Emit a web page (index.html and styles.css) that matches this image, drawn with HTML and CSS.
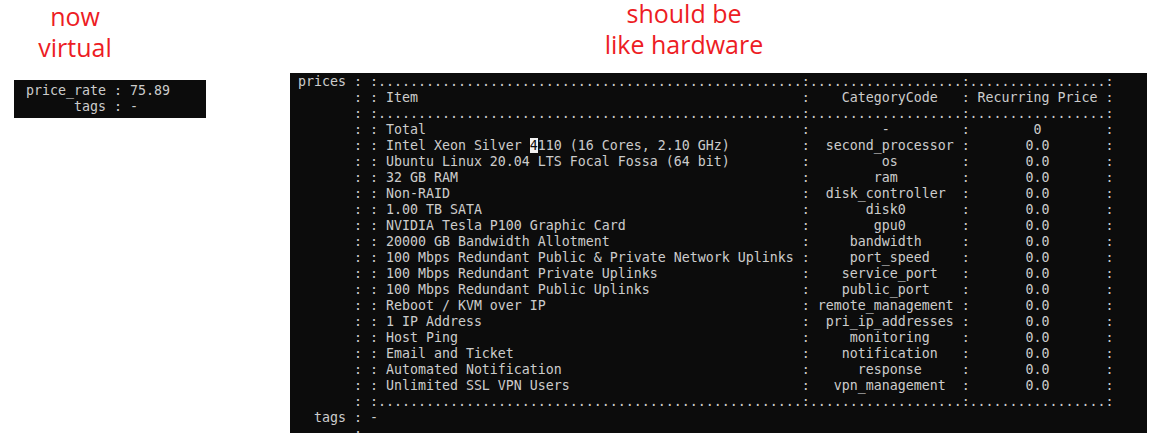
FILE: index.html
```html
<!DOCTYPE html>
<html lang="en">
<head>
<meta charset="utf-8">
<title>prices: virtual vs hardware</title>
<link rel="stylesheet" href="styles.css">
</head>
<body>
<div class="page">
  <section class="col col-virtual">
    <h2 class="note">now<br>virtual</h2>
    <div class="term term-small">
      <div class="row">price_rate : 75.89</div>
      <div class="row">      tags : -</div>
    </div>
  </section>

  <section class="col col-hw">
    <h2 class="note note-hw">should be<br>like hardware</h2>
    <div class="term term-big">
      <div class="row"><span class="k">prices</span><span class="s"> : </span><span class="b">:</span><span class="w53">.....................................................</span><span class="b">:</span><span class="w19">...................</span><span class="b">:</span><span class="w17">.................</span><span class="b">:</span></div>
      <div class="row"><span class="k"></span><span class="s"> : </span><span class="b">:</span><span class="w53 i1">Item</span><span class="b">:</span><span class="w19 i4">CategoryCode</span><span class="b">:</span><span class="w17 i1">Recurring Price</span><span class="b">:</span></div>
      <div class="row"><span class="k"></span><span class="s"> : </span><span class="b">:</span><span class="w53">.....................................................</span><span class="b">:</span><span class="w19">...................</span><span class="b">:</span><span class="w17">.................</span><span class="b">:</span></div>
      <div class="row"><span class="k"></span><span class="s"> : </span><span class="b">:</span><span class="w53 i1">Total</span><span class="b">:</span><span class="w19 i9">-</span><span class="b">:</span><span class="w17 i8">0</span><span class="b">:</span></div>
      <div class="row"><span class="k"></span><span class="s"> : </span><span class="b">:</span><span class="w53 i1">Intel Xeon Silver <span class="cursor">4</span>110 (16 Cores, 2.10 GHz)</span><span class="b">:</span><span class="w19 i2">second_processor</span><span class="b">:</span><span class="w17 i7">0.0</span><span class="b">:</span></div>
      <div class="row"><span class="k"></span><span class="s"> : </span><span class="b">:</span><span class="w53 i1">Ubuntu Linux 20.04 LTS Focal Fossa (64 bit)</span><span class="b">:</span><span class="w19 i9">os</span><span class="b">:</span><span class="w17 i7">0.0</span><span class="b">:</span></div>
      <div class="row"><span class="k"></span><span class="s"> : </span><span class="b">:</span><span class="w53 i1">32 GB RAM</span><span class="b">:</span><span class="w19 i8">ram</span><span class="b">:</span><span class="w17 i7">0.0</span><span class="b">:</span></div>
      <div class="row"><span class="k"></span><span class="s"> : </span><span class="b">:</span><span class="w53 i1">Non-RAID</span><span class="b">:</span><span class="w19 i2">disk_controller</span><span class="b">:</span><span class="w17 i7">0.0</span><span class="b">:</span></div>
      <div class="row"><span class="k"></span><span class="s"> : </span><span class="b">:</span><span class="w53 i1">1.00 TB SATA</span><span class="b">:</span><span class="w19 i7">disk0</span><span class="b">:</span><span class="w17 i7">0.0</span><span class="b">:</span></div>
      <div class="row"><span class="k"></span><span class="s"> : </span><span class="b">:</span><span class="w53 i1">NVIDIA Tesla P100 Graphic Card</span><span class="b">:</span><span class="w19 i8">gpu0</span><span class="b">:</span><span class="w17 i7">0.0</span><span class="b">:</span></div>
      <div class="row"><span class="k"></span><span class="s"> : </span><span class="b">:</span><span class="w53 i1">20000 GB Bandwidth Allotment</span><span class="b">:</span><span class="w19 i5">bandwidth</span><span class="b">:</span><span class="w17 i7">0.0</span><span class="b">:</span></div>
      <div class="row"><span class="k"></span><span class="s"> : </span><span class="b">:</span><span class="w53 i1">100 Mbps Redundant Public &amp; Private Network Uplinks</span><span class="b">:</span><span class="w19 i5">port_speed</span><span class="b">:</span><span class="w17 i7">0.0</span><span class="b">:</span></div>
      <div class="row"><span class="k"></span><span class="s"> : </span><span class="b">:</span><span class="w53 i1">100 Mbps Redundant Private Uplinks</span><span class="b">:</span><span class="w19 i4">service_port</span><span class="b">:</span><span class="w17 i7">0.0</span><span class="b">:</span></div>
      <div class="row"><span class="k"></span><span class="s"> : </span><span class="b">:</span><span class="w53 i1">100 Mbps Redundant Public Uplinks</span><span class="b">:</span><span class="w19 i4">public_port</span><span class="b">:</span><span class="w17 i7">0.0</span><span class="b">:</span></div>
      <div class="row"><span class="k"></span><span class="s"> : </span><span class="b">:</span><span class="w53 i1">Reboot / KVM over IP</span><span class="b">:</span><span class="w19 i1">remote_management</span><span class="b">:</span><span class="w17 i7">0.0</span><span class="b">:</span></div>
      <div class="row"><span class="k"></span><span class="s"> : </span><span class="b">:</span><span class="w53 i1">1 IP Address</span><span class="b">:</span><span class="w19 i2">pri_ip_addresses</span><span class="b">:</span><span class="w17 i7">0.0</span><span class="b">:</span></div>
      <div class="row"><span class="k"></span><span class="s"> : </span><span class="b">:</span><span class="w53 i1">Host Ping</span><span class="b">:</span><span class="w19 i5">monitoring</span><span class="b">:</span><span class="w17 i7">0.0</span><span class="b">:</span></div>
      <div class="row"><span class="k"></span><span class="s"> : </span><span class="b">:</span><span class="w53 i1">Email and Ticket</span><span class="b">:</span><span class="w19 i4">notification</span><span class="b">:</span><span class="w17 i7">0.0</span><span class="b">:</span></div>
      <div class="row"><span class="k"></span><span class="s"> : </span><span class="b">:</span><span class="w53 i1">Automated Notification</span><span class="b">:</span><span class="w19 i6">response</span><span class="b">:</span><span class="w17 i7">0.0</span><span class="b">:</span></div>
      <div class="row"><span class="k"></span><span class="s"> : </span><span class="b">:</span><span class="w53 i1">Unlimited SSL VPN Users</span><span class="b">:</span><span class="w19 i3">vpn_management</span><span class="b">:</span><span class="w17 i7">0.0</span><span class="b">:</span></div>
      <div class="row"><span class="k"></span><span class="s"> : </span><span class="b">:</span><span class="w53">.....................................................</span><span class="b">:</span><span class="w19">...................</span><span class="b">:</span><span class="w17">.................</span><span class="b">:</span></div>
      <div class="row"><span class="k">  tags</span><span class="s"> : </span><span class="b">-</span></div>
      <div class="row"><span class="k"></span><span class="s"> : </span></div>
    </div>
  </section>
</div>
</body>
</html>
```

FILE: styles.css
```css
html, body {
  margin: 0;
  padding: 0;
  background: #ffffff;
}

.page {
  display: flex;
  align-items: flex-start;
}

.col-virtual {
  width: 206px;
  flex: none;
}

.col-hw {
  margin-left: 84px;
  flex: none;
}

.note {
  margin: 1px 0 0 0;
  width: 150px;
  text-align: center;
  font-family: "Open Sans", "Noto Sans", sans-serif;
  font-weight: 400;
  font-size: 25px;
  line-height: 31px;
  color: #ed1c24;
}

.note-hw {
  margin-top: -2px;
  width: 788px;
}

.term {
  background: #0c0c0c;
  color: #cccccc;
  font-family: "DejaVu Sans Mono", "Liberation Mono", monospace;
  font-size: 13.29px;
  line-height: 16px;
  box-sizing: border-box;
  overflow: hidden;
}

.term-small {
  margin: 17px 0 0 14px;
  width: 192px;
  height: 38px;
  padding: 3px 0 0 12px;
}

.term-big {
  margin-top: 13px;
  width: 857px;
  height: 360px;
  padding: 1px 0 0 8px;
}

.row {
  display: flex;
  height: 16px;
  white-space: pre;
}

.row > span {
  flex: none;
  box-sizing: border-box;
}

.k { width: 6ch; }
.s { width: 3ch; }
.b { width: 1ch; }
.w53 { width: 53ch; }
.w19 { width: 19ch; }
.w17 { width: 17ch; }

.i1 { padding-left: 1ch; }
.i2 { padding-left: 2ch; }
.i3 { padding-left: 3ch; }
.i4 { padding-left: 4ch; }
.i5 { padding-left: 5ch; }
.i6 { padding-left: 6ch; }
.i7 { padding-left: 7ch; }
.i8 { padding-left: 8ch; }
.i9 { padding-left: 9ch; }

.cursor {
  background: #f2f2f2;
  color: #0c0c0c;
}
```
